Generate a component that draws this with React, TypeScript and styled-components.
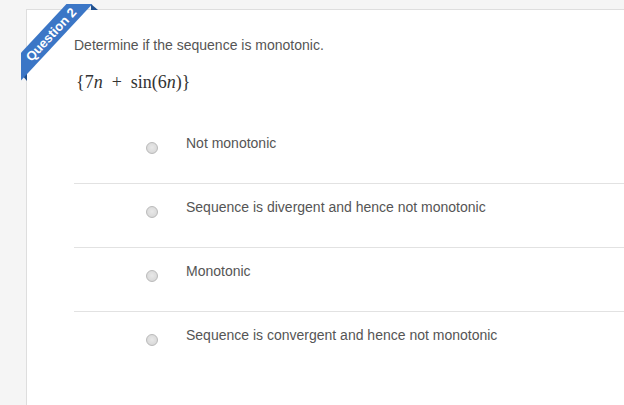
import React from "react";
import styled, { createGlobalStyle } from "styled-components";

const Global = createGlobalStyle`
  html, body { margin: 0; padding: 0; }
  body {
    background: #f5f5f5;
    font-family: Arial, "Liberation Sans", sans-serif;
    width: 624px;
    height: 405px;
    overflow: hidden;
  }
`;

const Page = styled.div`
  padding: 9px 0 0 26px;
  height: 405px;
  box-sizing: border-box;
`;

const Card = styled.div`
  position: relative;
  background: #fff;
  border: 1px solid #dedede;
  border-right: none;
  border-bottom: none;
  height: 396px;
  padding: 27px 0 0 47px;
  box-sizing: border-box;
`;

/* corner ribbon: overlays the card's top-left corner */
const RibbonClip = styled.div`
  position: absolute;
  left: -6px;
  top: -6px;
  width: 78px;
  height: 78px;
  overflow: hidden;
  pointer-events: none;
  z-index: 2;
`;

const Ribbon = styled.div`
  position: absolute;
  left: -35px;
  top: 21px;
  width: 130px;
  height: 19px;
  background: #3b76c6;
  color: #fff;
  font-family: Arial, "Liberation Sans", sans-serif;
  font-weight: bold;
  font-size: 13px;
  line-height: 19px;
  text-align: center;
  transform: rotate(-47deg);
`;

const Fold = styled.svg`
  position: absolute;
  left: -6px;
  top: -6px;
  width: 90px;
  height: 90px;
  z-index: 1;
  pointer-events: none;
`;

const Prompt = styled.div`
  font-size: 14px;
  color: #555;
  line-height: 16px;
`;

const MathLine = styled.div`
  margin-top: 18px;
  font-family: "Liberation Serif", "DejaVu Serif", serif;
  font-size: 18px;
  line-height: 22px;
  color: #333;
  padding-left: 2px;
`;

const I = styled.i`
  font-style: italic;
`;

const Answers = styled.div`
  margin-top: 27px;
`;

const Row = styled.div<{ $last?: boolean }>`
  display: flex;
  align-items: flex-start;
  height: 64px;
  box-sizing: border-box;
  border-bottom: ${(p) => (p.$last ? "none" : "1px solid #e2e2e2")};
`;

const Radio = styled.span`
  flex: none;
  width: 10px;
  height: 10px;
  border-radius: 50%;
  border: 1px solid #bababa;
  background: radial-gradient(circle at 50% 45%, #e8e8e8 0%, #dcdcdc 60%, #cccccc 100%);
  margin: 22px 0 0 72px;
`;

const Label = styled.span`
  margin: 15px 0 0 28px;
  font-size: 14px;
  color: #555;
  line-height: 16px;
`;

const answers = [
  "Not monotonic",
  "Sequence is divergent and hence not monotonic",
  "Monotonic",
  "Sequence is convergent and hence not monotonic",
];

export default function App() {
  return (
    <>
      <Global />
      <Page>
        <Card>
          <Fold viewBox="0 0 90 90">
            <polygon points="0,70 6,70 6,77" fill="#1f4f8e" />
            <polygon points="70,0 70,6 77,6" fill="#1f4f8e" />
          </Fold>
          <RibbonClip>
            <Ribbon>Question 2</Ribbon>
          </RibbonClip>
          <Prompt>Determine if the sequence is monotonic.</Prompt>
          <MathLine>
            {"{"}7<I>n</I>&nbsp;&nbsp;+&nbsp;&nbsp;sin(6<I>n</I>){"}"}
          </MathLine>
          <Answers>
            {answers.map((a, i) => (
              <Row key={a} $last={i === answers.length - 1}>
                <Radio />
                <Label>{a}</Label>
              </Row>
            ))}
          </Answers>
        </Card>
      </Page>
    </>
  );
}
